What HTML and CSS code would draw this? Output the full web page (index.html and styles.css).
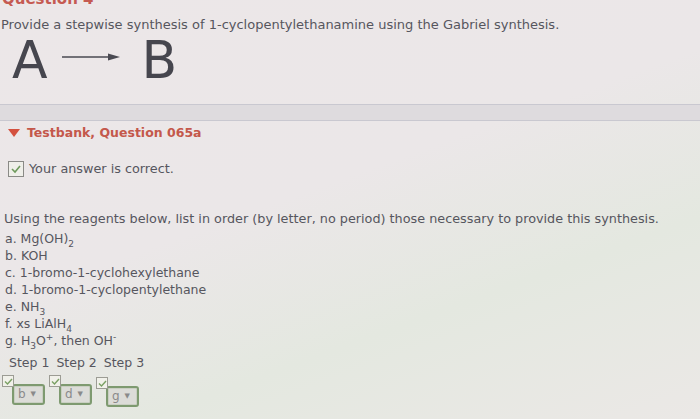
FILE: index.html
```html
<!DOCTYPE html>
<html>
<head>
<meta charset="utf-8">
<link rel="stylesheet" href="styles.css">
</head>
<body>
<div class="page">
  <div class="qtitle">Question 4</div>
  <p class="prompt">Provide a stepwise synthesis of 1-cyclopentylethanamine using the Gabriel synthesis.</p>
  <div class="reaction">
    <span class="mol">A</span>
    <svg class="arrow" width="58" height="10" viewBox="0 0 58 10"><line x1="0" y1="5" x2="50" y2="5" stroke="#4a4a52" stroke-width="1.6"/><polygon points="46,1.5 58,5 46,8.5" fill="#4a4a52"/></svg>
    <span class="mol">B</span>
  </div>
  <div class="band"></div>
  <div class="section-head"><span class="tri"></span>Testbank, Question 065a</div>
  <div class="result">
    <span class="check"><svg width="12" height="10" viewBox="0 0 12 10"><polyline points="2,5 5,8 10,2" fill="none" stroke="#6e9a5c" stroke-width="1.6"/></svg></span>
    Your answer is correct.
  </div>
  <p class="instr">Using the reagents below, list in order (by letter, no period) those necessary to provide this synthesis.</p>
  <ul class="reagents">
    <li>a. Mg(OH)<sub>2</sub></li>
    <li>b. KOH</li>
    <li>c. 1-bromo-1-cyclohexylethane</li>
    <li>d. 1-bromo-1-cyclopentylethane</li>
    <li>e. NH<sub>3</sub></li>
    <li>f. xs LiAlH<sub>4</sub></li>
    <li>g. H<sub>3</sub>O<sup>+</sup>, then OH<sup>-</sup></li>
  </ul>
  <div class="steps"><span>Step 1</span><span>Step 2</span><span>Step 3</span></div>
  <div class="answers">
    <div class="ans">
      <span class="mini"><svg width="9" height="7" viewBox="0 0 9 7"><polyline points="1,3.5 3.5,6 8,1" fill="none" stroke="#7aa064" stroke-width="1.4"/></svg></span>
      <span class="sel">b <i>▼</i></span>
    </div>
    <div class="ans">
      <span class="mini"><svg width="9" height="7" viewBox="0 0 9 7"><polyline points="1,3.5 3.5,6 8,1" fill="none" stroke="#7aa064" stroke-width="1.4"/></svg></span>
      <span class="sel">d <i>▼</i></span>
    </div>
    <div class="ans low">
      <span class="mini"><svg width="9" height="7" viewBox="0 0 9 7"><polyline points="1,3.5 3.5,6 8,1" fill="none" stroke="#7aa064" stroke-width="1.4"/></svg></span>
      <span class="sel">g <i>▼</i></span>
    </div>
  </div>
</div>
</body>
</html>
```

FILE: styles.css
```css
html, body {
  margin: 0;
  padding: 0;
  height: 100%;
}
body {
  background: linear-gradient(160deg, #ece7e8 0%, #ebe7e8 45%, #e4e8e0 70%, #ebe8e6 100%);
  font-family: "DejaVu Sans", Verdana, sans-serif;
  color: #56565e;
  overflow: hidden;
}
.page {
  width: 700px;
  height: 419px;
  position: relative;
  overflow: hidden;
}
.qtitle {
  color: #c55a52;
  font-weight: bold;
  font-size: 15px;
  line-height: 16px;
  margin: -9px 0 0 2px;
  height: 16px;
}
.prompt {
  margin: 10px 0 0 1px;
  font-size: 13px;
  line-height: 16px;
}
.reaction {
  display: flex;
  align-items: center;
  margin: 3px 0 0 12px;
  height: 48px;
}
.mol {
  font-family: "DejaVu Sans", sans-serif;
  font-size: 52px;
  line-height: 48px;
  color: #46464e;
  font-weight: normal;
}
.arrow {
  margin: 0 22px 6px 14px;
}
.band {
  margin-top: 20px;
  height: 15px;
  background: #dedbde;
  border-top: 1px solid #c9c8d0;
  border-bottom: 1px solid #c9c8d0;
}
.section-head {
  display: flex;
  align-items: center;
  margin: 3px 0 0 8px;
  color: #c4584b;
  font-weight: bold;
  font-size: 12.5px;
  line-height: 18px;
}
.tri {
  width: 0;
  height: 0;
  border-left: 6px solid transparent;
  border-right: 6px solid transparent;
  border-top: 8px solid #d4513f;
  margin-right: 7px;
}
.result {
  display: flex;
  align-items: center;
  margin: 18px 0 0 8px;
  font-size: 12.8px;
  line-height: 18px;
}
.check {
  width: 14px;
  height: 14px;
  border: 1px solid #8a8a86;
  background: #efefe9;
  display: flex;
  align-items: center;
  justify-content: center;
  margin-right: 5px;
}
.instr {
  margin: 33px 0 0 4px;
  font-size: 12.8px;
  line-height: 16px;
}
.reagents {
  list-style: none;
  margin: 3px 0 0 5px;
  padding: 0;
  font-size: 12.5px;
}
.reagents li {
  line-height: 17px;
  height: 17px;
}
.reagents sub, .reagents sup {
  font-size: 9px;
  line-height: 0;
}
.steps {
  display: flex;
  gap: 7px;
  margin: 5px 0 0 9px;
  font-size: 12.5px;
  line-height: 18px;
}
.answers {
  display: flex;
  gap: 16px;
  margin: 3px 0 0 2px;
}
.ans {
  position: relative;
  width: 31px;
  height: 35px;
}
.ans.low {
  top: 2px;
}
.mini {
  position: absolute;
  left: 0;
  top: 0;
  width: 10px;
  height: 10px;
  border: 1px solid #9c9c94;
  background: #f1f1ea;
  display: flex;
  align-items: center;
  justify-content: center;
  z-index: 2;
}
.sel {
  position: absolute;
  left: 10px;
  top: 9px;
  width: 25px;
  height: 17px;
  border: 2px solid #7e9a70;
  border-radius: 3px;
  background: #dcdcd8;
  box-shadow: inset 0 0 0 1px #c9cfc2;
  color: #8a8a8a;
  font-size: 12px;
  line-height: 17px;
  padding-left: 4px;
  box-sizing: content-box;
}
.sel i {
  font-style: normal;
  font-size: 7px;
  vertical-align: 2px;
  margin-left: 1px;
}
```
